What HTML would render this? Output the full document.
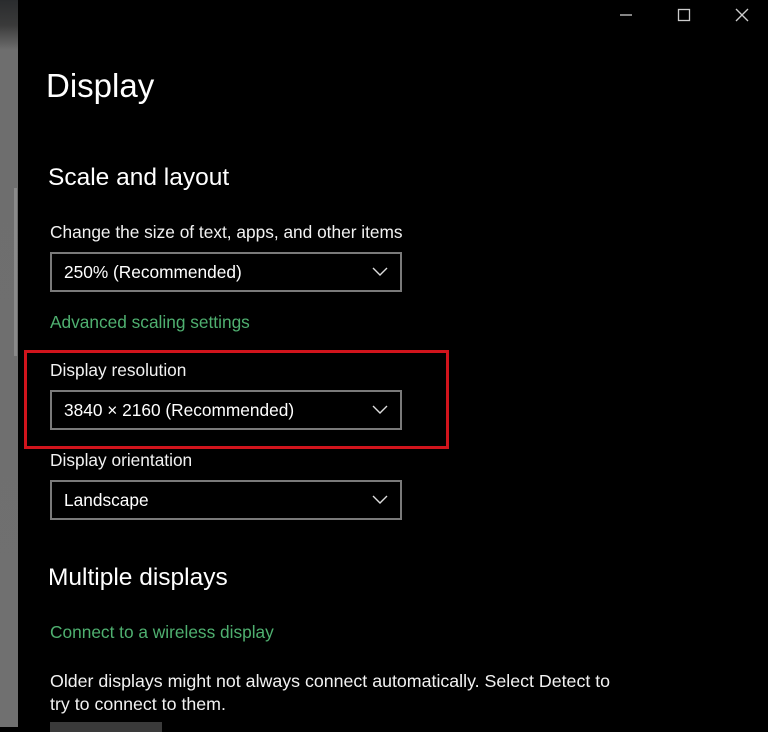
<!DOCTYPE html>
<html><head><style>
body{margin:0;width:768px;height:727px;background:#000;position:relative;overflow:hidden;font-family:"Liberation Sans",sans-serif;color:#fff}
.t{position:absolute;white-space:nowrap}
.strip{position:absolute;left:0;top:0;width:18px;height:727px;background:linear-gradient(#2a2c2e 0,#3a3a3a 25px,#6e6e6e 50px,#707070 100%)}
.thumb{position:absolute;left:14px;top:188px;width:3px;height:168px;background:#8a8a8a}
.dd{position:absolute;left:50px;width:348px;height:36px;border:2px solid #7a7a7a}
.dd span{position:absolute;left:12px;top:8px;font-size:17.3px;color:#fff}
.dd svg{position:absolute;right:12px;top:12px}
.g{color:#4fb070;font-size:17.3px}
.b{font-size:17.3px;color:#f2f2f2}
</style></head><body>
<div class="strip"></div><div class="thumb"></div>
<svg style="position:absolute;left:617px;top:8px" width="140" height="14">
<line x1="3" y1="7" x2="15" y2="7" stroke="#ccc" stroke-width="1.3"/>
<rect x="61.5" y="1.5" width="11" height="11" fill="none" stroke="#ccc" stroke-width="1.3"/>
<line x1="119" y1="1" x2="131" y2="13" stroke="#ccc" stroke-width="1.3"/>
<line x1="131" y1="1" x2="119" y2="13" stroke="#ccc" stroke-width="1.3"/>
</svg>
<div class="t" style="left:46px;top:67px;font-size:33px">Display</div>
<div class="t" style="left:48px;top:164px;font-size:24.5px">Scale and layout</div>
<div class="t b" style="left:50px;top:222px">Change the size of text, apps, and other items</div>
<div class="dd" style="top:252px"><span>250% (Recommended)</span><svg width="16" height="10"><polyline points="1,2 8,9 15,2" fill="none" stroke="#ddd" stroke-width="1.4"/></svg></div>
<div class="t g" style="left:50px;top:312px">Advanced scaling settings</div>
<div style="position:absolute;left:24px;top:350px;width:419px;height:93px;border:3px solid #d0141c"></div>
<div class="t b" style="left:50px;top:360px">Display resolution</div>
<div class="dd" style="top:390px"><span>3840 × 2160 (Recommended)</span><svg width="16" height="10"><polyline points="1,2 8,9 15,2" fill="none" stroke="#ddd" stroke-width="1.4"/></svg></div>
<div class="t b" style="left:50px;top:450px">Display orientation</div>
<div class="dd" style="top:480px"><span>Landscape</span><svg width="16" height="10"><polyline points="1,2 8,9 15,2" fill="none" stroke="#ddd" stroke-width="1.4"/></svg></div>
<div class="t" style="left:48px;top:564px;font-size:24.5px">Multiple displays</div>
<div class="t g" style="left:50px;top:622px">Connect to a wireless display</div>
<div class="t b" style="left:50px;top:671px;font-size:17.8px">Older displays might not always connect automatically. Select Detect to</div>
<div class="t b" style="left:50px;top:694px;font-size:17.8px">try to connect to them.</div>
<div style="position:absolute;left:50px;top:722px;width:112px;height:10px;background:#3a3a3a"></div>
</body></html>
